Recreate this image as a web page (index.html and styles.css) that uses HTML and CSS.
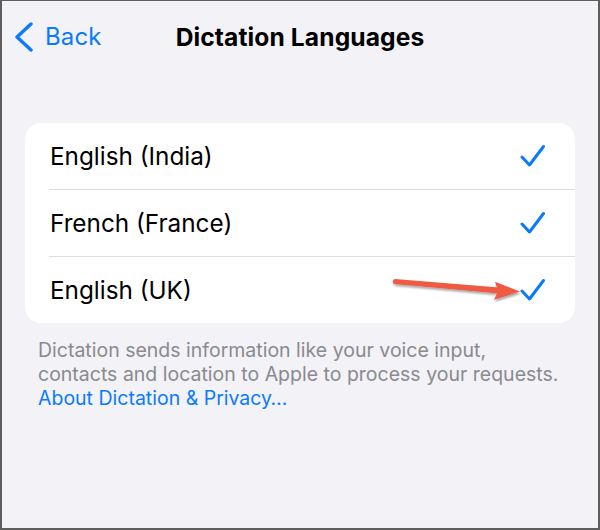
FILE: index.html
```html
<!DOCTYPE html>
<html lang="en">
<head>
<meta charset="utf-8">
<title>Dictation Languages</title>
<link rel="stylesheet" href="styles.css">
</head>
<body>
<div class="screen">
  <header class="nav">
    <a class="back" href="#">
      <svg class="chevron" width="20" height="30" viewBox="0 0 20 30" aria-hidden="true">
        <path d="M17 2 L3 15 L17 28" fill="none" stroke="#0a7aff" stroke-width="3.4" stroke-linecap="round" stroke-linejoin="round"/>
      </svg>
      <span>Back</span>
    </a>
    <h1 class="title">Dictation Languages</h1>
    <span></span>
  </header>

  <main class="content">
    <ul class="group">
      <li class="row">
        <span class="label">English (India)</span>
        <svg class="check" width="26" height="24" viewBox="0 0 26 24" aria-hidden="true">
          <path d="M2 13 L9.5 21 L23.5 2.5" fill="none" stroke="#0a7aff" stroke-width="3" stroke-linecap="round" stroke-linejoin="round"/>
        </svg>
      </li>
      <li class="row">
        <span class="label">French (France)</span>
        <svg class="check" width="26" height="24" viewBox="0 0 26 24" aria-hidden="true">
          <path d="M2 13 L9.5 21 L23.5 2.5" fill="none" stroke="#0a7aff" stroke-width="3" stroke-linecap="round" stroke-linejoin="round"/>
        </svg>
      </li>
      <li class="row">
        <span class="label">English (UK)</span>
        <svg class="check" width="26" height="24" viewBox="0 0 26 24" aria-hidden="true">
          <path d="M2 13 L9.5 21 L23.5 2.5" fill="none" stroke="#0a7aff" stroke-width="3" stroke-linecap="round" stroke-linejoin="round"/>
        </svg>
        <!-- callout arrow pointing at the selected language -->
        <svg class="pointer" width="140" height="30" viewBox="0 0 140 30" aria-hidden="true">
          <defs>
            <filter id="arrow-shadow" x="-10%" y="-50%" width="120%" height="200%">
              <feDropShadow dx="1" dy="2" stdDeviation="1.3" flood-color="#000" flood-opacity="0.35"/>
            </filter>
          </defs>
          <g filter="url(#arrow-shadow)" fill="#ee5a43">
            <path d="M4 5 L108 13.4 L108 19.6 L3.5 10 Q1.5 9.4 1.8 7.3 Q2.3 5.1 4 5 Z"/>
            <path d="M104 7.8 L129 17.6 L103 25.7 L107 17 Z"/>
          </g>
        </svg>
      </li>
    </ul>

    <p class="footnote">
      Dictation sends information like your voice input,<br>
      contacts and location to Apple to process your requests.<br>
      <a class="link" href="#">About Dictation &amp; Privacy…</a>
    </p>
  </main>
</div>
</body>
</html>
```

FILE: styles.css
```css
* {
  box-sizing: border-box;
}

html,
body {
  margin: 0;
  padding: 0;
}

body {
  font-family: Inter, "Liberation Sans", Arial, sans-serif;
  -webkit-font-smoothing: antialiased;
}

.screen {
  width: 600px;
  height: 530px;
  background: #f2f2f7;
  border: 2px solid #5e5e5e;
  border-top-width: 1px;
  overflow: hidden;
}

/* navigation bar */
.nav {
  height: 71px;
  display: grid;
  grid-template-columns: 1fr auto 1fr;
  align-items: center;
}

.back {
  display: flex;
  align-items: center;
  gap: 11px;
  padding-left: 12px;
  color: #0a7aff;
  text-decoration: none;
  font-size: 24px;
  letter-spacing: 0.1px;
}

.chevron {
  display: block;
}

.title {
  margin: 0;
  font-size: 24.6px;
  font-weight: 700;
  color: #000;
  letter-spacing: 0.1px;
}

/* grouped list */
.content {
  padding: 51px 23px 0;
}

.group {
  list-style: none;
  margin: 0;
  padding: 0 0 0 24px;
  background: #fff;
  border-radius: 16px;
}

.row {
  position: relative;
  height: 67px;
  display: flex;
  align-items: center;
  justify-content: space-between;
  padding-right: 29px;
  border-bottom: 1px solid #dedee2;
}

.row:last-child {
  height: 66px;
  border-bottom: none;
}

.label {
  font-size: 24.3px;
  color: #000;
  padding-left: 1px;
}

.check {
  display: block;
}

.pointer {
  position: absolute;
  left: 342px;
  top: 17px;
}

/* footnote under the group */
.footnote {
  margin: 15px 0 0;
  padding-left: 13px;
  font-size: 19.5px;
  line-height: 24px;
  color: #8a8a8e;
}

.link {
  color: #0a7aff;
  text-decoration: none;
}
```
